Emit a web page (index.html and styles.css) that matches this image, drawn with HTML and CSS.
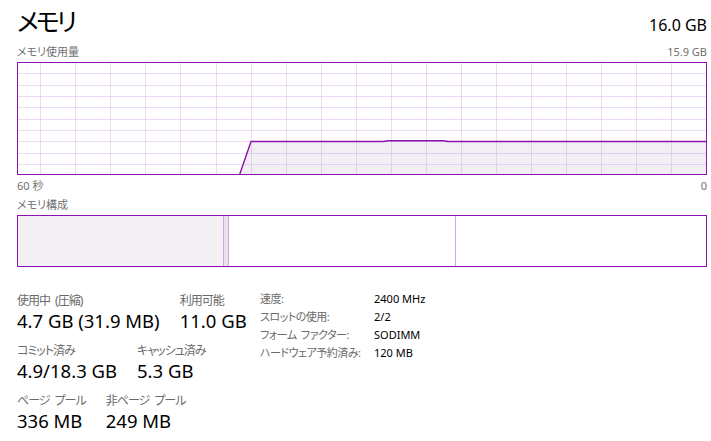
FILE: index.html
```html
<!DOCTYPE html>
<html lang="ja">
	<head>
		<meta charset="utf-8">
		<title>メモリ</title>
		<link rel="stylesheet" href="styles.css">
	</head>
	<body>
		<div class="head">
			<h1 class="title">メモリ</h1>
			<span class="total">16.0 GB</span>
		</div>

		<div class="caption">
			<span>メモリ使用量</span>
			<span>15.9 GB</span>
		</div>
		<div class="graph">
			<svg width="688" height="111" viewBox="0 0 688 111">
				<!-- usage fill under the line -->
				<polygon points="222,112 233,78 365,78 370,77 425,77 430,78 688,78 688,112" fill="#f2eff4"/>
				<g stroke="#b56fd0" stroke-opacity="0.25" stroke-width="1">
					<line x1="22.5" y1="0" x2="22.5" y2="112"/>
					<line x1="57.5" y1="0" x2="57.5" y2="112"/>
					<line x1="92.5" y1="0" x2="92.5" y2="112"/>
					<line x1="127.5" y1="0" x2="127.5" y2="112"/>
					<line x1="162.5" y1="0" x2="162.5" y2="112"/>
					<line x1="198.5" y1="0" x2="198.5" y2="112"/>
					<line x1="233.5" y1="0" x2="233.5" y2="112"/>
					<line x1="268.5" y1="0" x2="268.5" y2="112"/>
					<line x1="303.5" y1="0" x2="303.5" y2="112"/>
					<line x1="338.5" y1="0" x2="338.5" y2="112"/>
					<line x1="373.5" y1="0" x2="373.5" y2="112"/>
					<line x1="408.5" y1="0" x2="408.5" y2="112"/>
					<line x1="443.5" y1="0" x2="443.5" y2="112"/>
					<line x1="478.5" y1="0" x2="478.5" y2="112"/>
					<line x1="513.5" y1="0" x2="513.5" y2="112"/>
					<line x1="548.5" y1="0" x2="548.5" y2="112"/>
					<line x1="583.5" y1="0" x2="583.5" y2="112"/>
					<line x1="618.5" y1="0" x2="618.5" y2="112"/>
					<line x1="653.5" y1="0" x2="653.5" y2="112"/>
					<line x1="0" y1="10.5" x2="688" y2="10.5"/>
					<line x1="0" y1="22.5" x2="688" y2="22.5"/>
					<line x1="0" y1="33.5" x2="688" y2="33.5"/>
					<line x1="0" y1="44.5" x2="688" y2="44.5"/>
					<line x1="0" y1="56.5" x2="688" y2="56.5"/>
					<line x1="0" y1="67.5" x2="688" y2="67.5"/>
					<line x1="0" y1="78.5" x2="688" y2="78.5"/>
					<line x1="0" y1="90.5" x2="688" y2="90.5"/>
					<line x1="0" y1="101.5" x2="688" y2="101.5"/>
				</g>
				<polyline points="221.5,112 233,78.5 365,78.5 370,77.8 425,77.8 430,78.5 688,78.5" fill="none" stroke="#8b12ae" stroke-width="1.4"/>
			</svg>
		</div>
		<div class="axis">
			<span>60 秒</span>
			<span>0</span>
		</div>

		<div class="caption caption--gap">
			<span>メモリ構成</span>
		</div>
		<div class="bar">
			<div class="seg seg--used"></div>
			<div class="seg seg--modified"></div>
			<div class="seg seg--standby"></div>
			<div class="seg seg--free"></div>
		</div>

		<div class="stats">
			<div class="figures">
				<div class="row">
					<div class="stat">
						<div class="label">使用中 (圧縮)</div>
						<div class="value">4.7 GB (31.9 MB)</div>
					</div>
					<div class="stat">
						<div class="label">利用可能</div>
						<div class="value">11.0 GB</div>
					</div>
				</div>
				<div class="row">
					<div class="stat">
						<div class="label">コミット済み</div>
						<div class="value">4.9/18.3 GB</div>
					</div>
					<div class="stat">
						<div class="label">キャッシュ済み</div>
						<div class="value">5.3 GB</div>
					</div>
				</div>
				<div class="row">
					<div class="stat">
						<div class="label">ページ プール</div>
						<div class="value">336 MB</div>
					</div>
					<div class="stat">
						<div class="label">非ページ プール</div>
						<div class="value">249 MB</div>
					</div>
				</div>
			</div>

			<table class="specs">
				<tr><th>速度:</th><td>2400 MHz</td></tr>
				<tr><th>スロットの使用:</th><td>2/2</td></tr>
				<tr><th>フォーム ファクター:</th><td>SODIMM</td></tr>
				<tr><th>ハードウェア予約済み:</th><td>120 MB</td></tr>
			</table>
		</div>
	</body>
</html>
```

FILE: styles.css
```css
/* Page */
* {
	margin: 0;
	padding: 0;
	box-sizing: border-box;
}

body {
	font-family: 'Noto Sans', 'Noto Sans CJK JP', sans-serif;
	font-feature-settings: 'palt';
	color: #000;
	background: #fff;
	padding: 3px 4px 0 17px;
}

/* Header */
.head {
	display: flex;
	justify-content: space-between;
	align-items: baseline;
}

.title {
	font-size: 25px;
	font-weight: normal;
	line-height: 36px;
	letter-spacing: -3px;
}

.total {
	font-size: 16px;
}

/* Small grey captions above and below the charts */
.caption,
.axis {
	display: flex;
	justify-content: space-between;
	font-size: 11px;
	line-height: 14px;
	color: #707070;
}

.caption {
	margin-top: 6px;
	margin-bottom: 3px;
}

.caption--gap {
	margin-top: 5px;
	margin-bottom: 3px;
}

.axis {
	margin-top: 4px;
}

/* Usage graph */
.graph {
	height: 113px;
	border: 1px solid #8b12ae;
}

.graph svg {
	display: block;
}

/* Composition bar */
.bar {
	display: flex;
	height: 52px;
	border: 1px solid #8b12ae;
}

.seg {
	height: 100%;
}

.seg--used {
	width: 206px;
	background: #f2f0f3;
	border-right: 1px solid #cfa9da;
}

.seg--modified {
	width: 5px;
	background: #eee0f1;
	border-right: 1px solid #cfa9da;
}

.seg--standby {
	width: 227px;
	border-right: 1px solid #cfa9da;
}

.seg--free {
	flex: 1;
}

/* Figures below */
.stats {
	display: flex;
	align-items: flex-start;
	margin-top: 26px;
}

.figures {
	width: 243px;
}

.row {
	display: flex;
	gap: 20px;
	margin-bottom: 10px;
}

.label {
	font-size: 12px;
	line-height: 16px;
	letter-spacing: -1px;
	word-spacing: 3px;
	color: #6a6a6a;
}

.value {
	font-size: 18.5px;
	line-height: 24px;
}

.specs {
	border-collapse: collapse;
	font-size: 11px;
	margin-top: -4px;
}

.specs th {
	width: 114px;
	text-align: left;
	font-weight: normal;
	letter-spacing: -0.5px;
	word-spacing: 2px;
	color: #6a6a6a;
	padding: 0;
	height: 18px;
}

.specs td {
	padding: 0;
	height: 18px;
}
```
